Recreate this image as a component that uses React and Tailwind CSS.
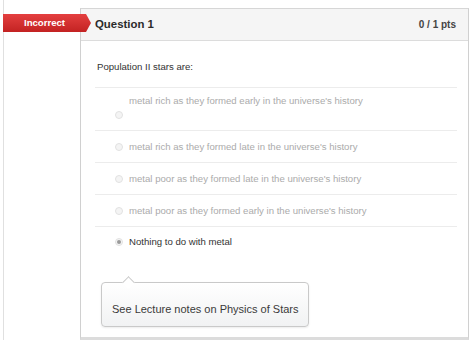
import React from "react";

const answers = [
  { text: "metal rich as they formed early in the universe's history", tall: true },
  { text: "metal rich as they formed late in the universe's history" },
  { text: "metal poor as they formed late in the universe's history" },
  { text: "metal poor as they formed early in the universe's history" },
];

function Radio({ checked }) {
  return (
    <span className="flex h-[8px] w-[8px] shrink-0 items-center justify-center rounded-full border border-[#e2e2e2] bg-[#f4f4f4]">
      {checked && <span className="h-[4px] w-[4px] rounded-full bg-[#9a9a9a]" />}
    </span>
  );
}

export default function App() {
  return (
    <div className="relative flex h-[340px] w-[474px] overflow-hidden bg-white font-['Liberation_Sans',Arial,sans-serif] text-[#333]">
      {/* left rail */}
      <div className="ml-[3px] w-[77px] shrink-0 border-l border-[#e0e0e0]" />

      {/* status tag */}
      <div className="absolute left-[3px] top-[14px] flex h-[18px] w-[88px] items-center justify-center bg-gradient-to-b from-[#e43f3f] to-[#c32222] pr-[5px] text-[9.6px] font-bold text-white [clip-path:polygon(0_0,calc(100%-5px)_0,100%_50%,calc(100%-5px)_100%,0_100%)]">
        Incorrect
      </div>

      {/* question card */}
      <div className="mr-[5px] mt-[8px] flex flex-1 flex-col border-x border-t border-b-[3px] border-x-[#d0d0d0] border-t-[#d6d6d6] border-b-[#dcdcdc]">
        <div className="flex h-[32px] items-center justify-between border-b border-[#dcdcdc] bg-[#f5f5f5] pl-[14px] pr-[12px]">
          <span className="text-[11.4px] font-bold text-[#2b2b2b]">Question 1</span>
          <span className="text-[10px] font-bold text-[#444]">0 / 1 pts</span>
        </div>

        <div className="flex flex-col pl-[14px] pr-[11px] pt-[19px]">
          <p className="pl-[2px] text-[9.6px] leading-[14px]">Population II stars are:</p>

          <div className="mt-[13px] flex flex-col">
            {answers.map((a, i) =>
              a.tall ? (
                <div key={i} className="flex h-[43px] items-start border-t border-[#ececec] pl-[20px]">
                  <span className="mt-[23px]">
                    <Radio />
                  </span>
                  <span className="ml-[6px] mt-[6px] text-[9.6px] leading-[14px] text-[#ababab]">{a.text}</span>
                </div>
              ) : (
                <div key={i} className="flex h-[32px] items-center border-t border-[#ececec] pl-[20px]">
                  <Radio />
                  <span className="ml-[6px] text-[9.6px] leading-[14px] text-[#ababab]">{a.text}</span>
                </div>
              )
            )}
            <div className="flex h-[30px] items-center border-t border-[#ececec] pl-[20px]">
              <Radio checked />
              <span className="ml-[6px] text-[9.6px] leading-[14px] text-[#333]">Nothing to do with metal</span>
            </div>
          </div>

          <div className="relative ml-[6px] mt-[26px] h-[45px] w-[208px] rounded-[4px] border border-[#c9c9c9] bg-gradient-to-b from-[#ffffff] to-[#f1f2f3] pl-[10px] pt-[19px] shadow-[0_1px_2px_rgba(0,0,0,0.08)]">
            <span className="absolute left-[22px] top-[-5px] h-[9px] w-[9px] rotate-45 border-l border-t border-[#c9c9c9] bg-white" />
            <p className="text-[11px] leading-[14px] text-[#3a3a3a]">See Lecture notes on Physics of Stars</p>
          </div>
        </div>
      </div>
    </div>
  );
}
